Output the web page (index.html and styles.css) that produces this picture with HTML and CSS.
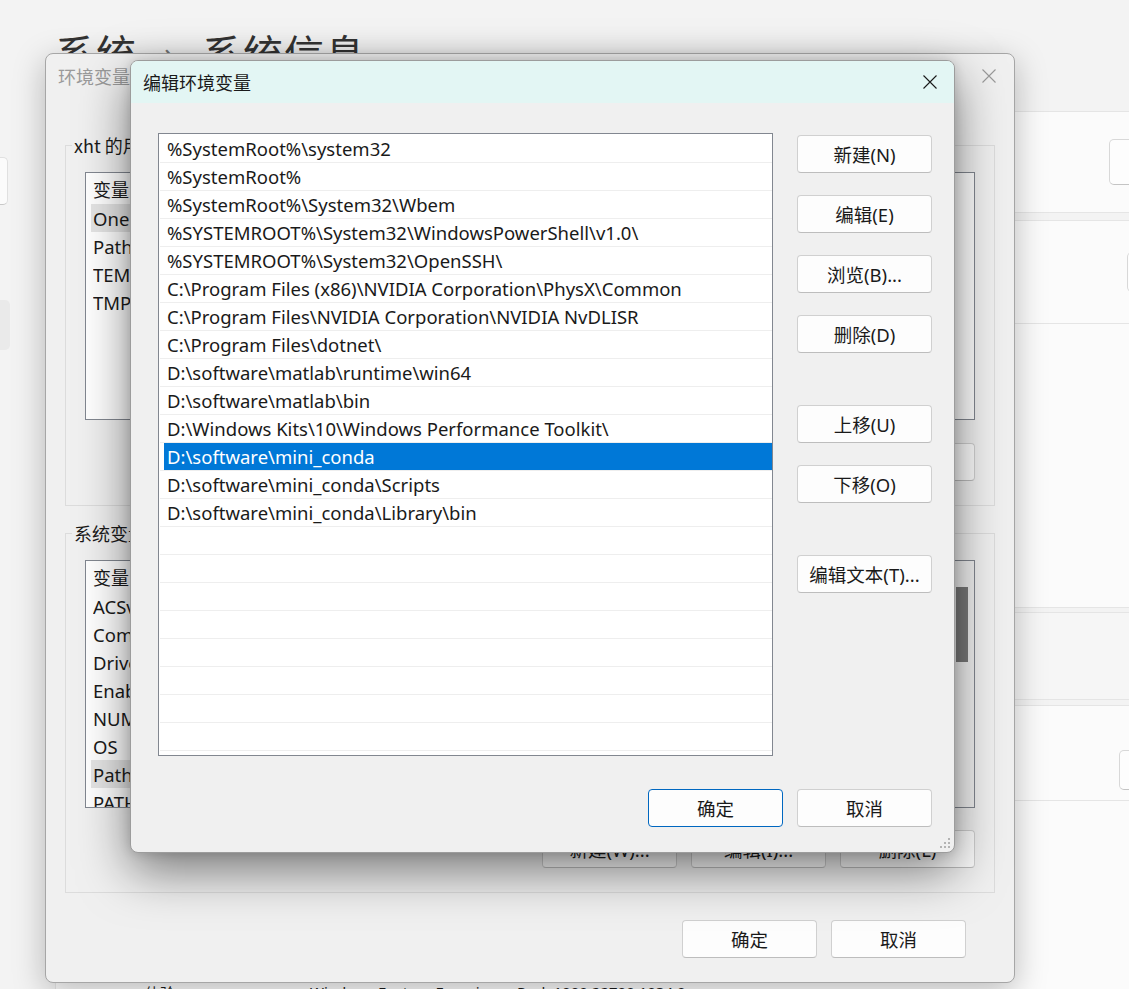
FILE: index.html
```html
<!DOCTYPE html>
<html lang="zh-CN">
<head>
    <meta charset="UTF-8">
    <title>编辑环境变量</title>
    <link rel="stylesheet" href="styles.css">
</head>
<body>
    <!-- settings app in the back -->
    <div class="settings">
        <div class="nav">
            <div class="nav-search"></div>
            <div class="nav-item"></div>
        </div>
        <div class="page">
            <div class="page-title">系统<span class="crumb">›</span>系统信息</div>
            <div class="cards">
                <div class="card card-a">
                    <div class="card-btn btn-a"></div>
                </div>
                <div class="card card-b">
                    <div class="card-head">
                        <div class="card-btn btn-b"></div>
                    </div>
                    <div class="card-body"></div>
                </div>
                <div class="card card-c"></div>
                <div class="card card-d">
                    <div class="card-head">
                        <div class="card-btn btn-d"></div>
                    </div>
                    <div class="spec-list">
                        <div class="spec"><span class="spec-key">版本</span><span>Windows 11 专业版</span></div>
                        <div class="spec"><span class="spec-key">版本号</span><span>22H2</span></div>
                        <div class="spec"><span class="spec-key">安装日期</span><span>2023/3/2</span></div>
                        <div class="spec"><span class="spec-key">操作系统版本</span><span>22621.1413</span></div>
                        <div class="spec"><span class="spec-key">体验</span><span>Windows Feature Experience Pack 1000.22700.1034.0</span></div>
                    </div>
                </div>
            </div>
        </div>
    </div>

    <!-- 环境变量 (inactive) -->
    <div class="window env-window">
        <div class="titlebar">
            <span class="title">环境变量</span>
            <svg class="close" width="16" height="16" viewBox="0 0 16 16"><path d="M1.5 1.5L14.5 14.5M14.5 1.5L1.5 14.5" stroke="currentColor" stroke-width="1.1" fill="none"/></svg>
        </div>
        <div class="env-body">
            <fieldset class="group">
                <legend>xht 的用户变量(U)</legend>
                <div class="listview">
                    <div class="lv-content">
                        <div class="lv-head"><span class="col-name">变量</span><span>值</span></div>
                        <div class="lv-row hot"><span class="col-name">OneDrive</span><span>C:\Users\xht\OneDrive</span></div>
                        <div class="lv-row"><span class="col-name">Path</span><span>C:\Users\xht\AppData\Local\Microsoft\WindowsApps;</span></div>
                        <div class="lv-row"><span class="col-name">TEMP</span><span>C:\Users\xht\AppData\Local\Temp</span></div>
                        <div class="lv-row"><span class="col-name">TMP</span><span>C:\Users\xht\AppData\Local\Temp</span></div>
                    </div>
                </div>
                <div class="btn-row">
                    <button class="btn">新建(N)...</button>
                    <button class="btn">编辑(E)...</button>
                    <button class="btn">删除(D)</button>
                </div>
            </fieldset>
            <fieldset class="group group-sys">
                <legend>系统变量(S)</legend>
                <div class="listview">
                    <div class="lv-content">
                        <div class="lv-head"><span class="col-name">变量</span><span>值</span></div>
                        <div class="lv-row"><span class="col-name">ACSvcPort</span><span>17532</span></div>
                        <div class="lv-row"><span class="col-name">ComSpec</span><span>C:\Windows\system32\cmd.exe</span></div>
                        <div class="lv-row"><span class="col-name">DriverData</span><span>C:\Windows\System32\Drivers\DriverData</span></div>
                        <div class="lv-row"><span class="col-name">EnableLog</span><span>INFO</span></div>
                        <div class="lv-row"><span class="col-name">NUMBER_OF_PROCESSORS</span><span>16</span></div>
                        <div class="lv-row"><span class="col-name">OS</span><span>Windows_NT</span></div>
                        <div class="lv-row hot"><span class="col-name">Path</span><span>%SystemRoot%\system32;%SystemRoot%;</span></div>
                        <div class="lv-row"><span class="col-name">PATHEXT</span><span>.COM;.EXE;.BAT;.CMD</span></div>
                    </div>
                    <div class="lv-scroll"><div class="lv-thumb"></div></div>
                </div>
                <div class="btn-row">
                    <button class="btn">新建(W)...</button>
                    <button class="btn">编辑(I)...</button>
                    <button class="btn">删除(L)</button>
                </div>
            </fieldset>
            <div class="footer env-footer">
                <button class="btn">确定</button>
                <button class="btn">取消</button>
            </div>
        </div>
    </div>

    <!-- 编辑环境变量 (active) -->
    <div class="window edit-window">
        <div class="titlebar active">
            <span class="title">编辑环境变量</span>
            <svg class="close" width="16" height="16" viewBox="0 0 16 16"><path d="M1.5 1.5L14.5 14.5M14.5 1.5L1.5 14.5" stroke="currentColor" stroke-width="1.1" fill="none"/></svg>
        </div>
        <div class="edit-body">
            <div class="edit-main">
                <div class="listbox" id="path_list"></div>
                <div class="btn-col">
                    <button class="btn">新建(N)</button>
                    <button class="btn">编辑(E)</button>
                    <button class="btn">浏览(B)...</button>
                    <button class="btn">删除(D)</button>
                    <button class="btn spaced">上移(U)</button>
                    <button class="btn">下移(O)</button>
                    <button class="btn spaced">编辑文本(T)...</button>
                </div>
            </div>
            <div class="footer">
                <button class="btn focused">确定</button>
                <button class="btn">取消</button>
            </div>
        </div>
        <svg class="grip" width="12" height="12" viewBox="0 0 12 12">
            <rect x="9" y="1" width="2" height="2"/>
            <rect x="5" y="5" width="2" height="2"/>
            <rect x="9" y="5" width="2" height="2"/>
            <rect x="1" y="9" width="2" height="2"/>
            <rect x="5" y="9" width="2" height="2"/>
            <rect x="9" y="9" width="2" height="2"/>
        </svg>
    </div>

    <script>
        var paths = [
            '%SystemRoot%\\system32',
            '%SystemRoot%',
            '%SystemRoot%\\System32\\Wbem',
            '%SYSTEMROOT%\\System32\\WindowsPowerShell\\v1.0\\',
            '%SYSTEMROOT%\\System32\\OpenSSH\\',
            'C:\\Program Files (x86)\\NVIDIA Corporation\\PhysX\\Common',
            'C:\\Program Files\\NVIDIA Corporation\\NVIDIA NvDLISR',
            'C:\\Program Files\\dotnet\\',
            'D:\\software\\matlab\\runtime\\win64',
            'D:\\software\\matlab\\bin',
            'D:\\Windows Kits\\10\\Windows Performance Toolkit\\',
            'D:\\software\\mini_conda',
            'D:\\software\\mini_conda\\Scripts',
            'D:\\software\\mini_conda\\Library\\bin'
        ];
        var selected = 11;
        var list = document.getElementById('path_list');

        // the listbox keeps drawing empty rows down to the bottom
        for (var i = 0; i < 22; i++) {
            var row = document.createElement('div');
            row.className = 'lb-row' + (i === selected ? ' selected' : '');
            var item = document.createElement('div');
            item.className = 'lb-item';
            item.textContent = paths[i] || '';
            row.appendChild(item);
            list.appendChild(row);
        }
    </script>
</body>
</html>
```

FILE: styles.css
```css
* {box-sizing: border-box;}
html, body {
    margin: 0;
    width: 1129px;
    height: 989px;
    overflow: hidden;
}
body {
    position: relative;
    background: #f3f3f3;
    font-family: "Noto Sans", "Noto Sans CJK SC", sans-serif;
    font-size: 18.5px;
    color: #1a1a1a;
}

/* ---- settings app behind ---- */
.settings {
    display: flex;
    height: 989px;
    overflow: hidden;
}
.nav {
    width: 10px;
    flex-shrink: 0;
}
.nav-search {
    margin: 157px 0 0 -40px;
    width: 48px;
    height: 48px;
    background: #fbfbfb;
    border: 1px solid #e0e0e0;
    border-bottom-color: #c8c8c8;
    border-radius: 5px;
}
.nav-item {
    margin: 95px 0 0 -40px;
    width: 50px;
    height: 50px;
    background: #eaeaea;
    border-radius: 5px;
}
.page {
    flex: 1;
    min-width: 0;
    padding: 24px 0 0 45px;
}
.page-title {
    font-family: "Noto Sans CJK SC", sans-serif;
    font-size: 40px;
    line-height: 56px;
    color: #333;
    letter-spacing: 1px;
}
.crumb {
    margin: 0 26px;
    color: #777;
}
.cards {
    margin: 31px -111px 0 0;
    display: flex;
    flex-direction: column;
}
.card {
    background: #fbfbfb;
    border: 1px solid #e5e5e5;
    border-radius: 6px;
}
.card-a {
    height: 102px;
    display: flex;
    align-items: center;
    justify-content: flex-end;
    padding-right: 12px;
}
.card-b {
    margin-top: 7px;
    height: 388px;
}
.card-head {
    height: 103px;
    display: flex;
    align-items: center;
    justify-content: flex-end;
    padding-right: 12px;
    border-bottom: 1px solid #e5e5e5;
}
.card-c {
    margin-top: 4px;
    height: 88px;
    background: #f6f6f6;
}
.card-d {
    margin-top: 5px;
    height: 300px;
}
.card-d .card-head {
    height: 95px;
    align-items: flex-end;
    padding-bottom: 10px;
}
.card-btn {
    height: 40px;
    background: #fdfdfd;
    border: 1px solid #d8d8d8;
    border-bottom-color: #c4c4c4;
    border-radius: 5px;
}
.btn-a {
    width: 118px;
    height: 46px;
}
.btn-b {
    width: 100px;
}
.btn-d {
    width: 108px;
}
.spec-list {
    padding: 47px 0 0 89px;
    font-size: 15px;
}
.spec {
    display: flex;
    height: 32px;
    align-items: center;
    white-space: nowrap;
}
.spec-key {
    width: 165px;
}

/* ---- windows ---- */
.window {
    position: absolute;
    background: #f0f0f0;
    border-radius: 8px;
    display: flex;
    flex-direction: column;
}
.titlebar {
    display: flex;
    align-items: center;
    justify-content: space-between;
    flex-shrink: 0;
}
.titlebar .title {
    font-family: "Noto Sans CJK SC", sans-serif;
    font-size: 18px;
}
.close {
    display: block;
}

.btn {
    width: 135px;
    height: 38px;
    padding: 0;
    background: #fdfdfd;
    border: 1px solid #d0d0d0;
    border-bottom-color: #bdbdbd;
    border-radius: 4px;
    font-family: "Noto Sans", "Noto Sans CJK SC", sans-serif;
    font-size: 18.5px;
    color: #1a1a1a;
}
.btn.focused {
    border: 1px solid #0067c0;
}
.footer {
    display: flex;
    justify-content: flex-end;
    gap: 14px;
}

/* environment variables dialog */
.env-window {
    left: 45px;
    top: 53px;
    width: 970px;
    height: 930px;
    border: 1px solid #a6a6a6;
    box-shadow: 0 8px 32px rgba(0, 0, 0, 0.26);
}
.env-window .titlebar {
    height: 43px;
    padding: 0 17px 0 12px;
}
.env-window .title,
.env-window .close {
    color: #9a9a9a;
}
.env-body {
    padding: 36px 19px 0 19px;
}
.group {
    margin: 0;
    padding: 15px 19px 24px 19px;
    border: 1px solid #dcdcdc;
    min-width: 0;
}
.group legend {
    margin-left: -13px;
    padding: 0 2px;
    line-height: 24px;
    font-family: "Noto Sans CJK SC", sans-serif;
    font-size: 18px;
}
.group-sys {
    margin-top: 15px;
    padding-bottom: 24px;
}
.listview {
    display: flex;
    height: 248px;
    background: #fff;
    border: 1px solid #828790;
    overflow: hidden;
}
.lv-content {
    flex: 1;
    min-width: 0;
}
.lv-head, .lv-row {
    display: flex;
    align-items: center;
    white-space: nowrap;
}
.lv-head {
    height: 31px;
    padding-left: 7px;
    font-family: "Noto Sans CJK SC", sans-serif;
    font-size: 18px;
}
.lv-row {
    width: 820px;
    height: 28px;
    margin-left: 5px;
    padding-left: 2px;
    overflow: hidden;
}
.lv-row.hot {
    background: #e5e5e5;
}
.col-name {
    width: 230px;
    flex-shrink: 0;
    overflow: hidden;
}
.lv-scroll {
    width: 19px;
    flex-shrink: 0;
    background: #f2f2f2;
    padding: 26px 0 0 1px;
}
.lv-thumb {
    width: 12px;
    height: 75px;
    background: #7a7a7a;
}
.btn-row {
    display: flex;
    justify-content: flex-end;
    gap: 14px;
    margin-top: 23px;
}
.group-sys .btn-row {
    margin-top: 22px;
}
.env-footer {
    margin-top: 27px;
    padding-right: 29px;
}

/* edit dialog */
.edit-window {
    left: 130px;
    top: 60px;
    width: 825px;
    height: 793px;
    border: 1px solid #9c9c9c;
    overflow: hidden;
    box-shadow: 0 18px 50px rgba(0, 0, 0, 0.5), 0 0 12px rgba(0, 0, 0, 0.14);
}
.edit-window .titlebar {
    height: 42px;
    padding: 0 16px 0 12px;
    background: #e3f6f4;
}
.edit-body {
    padding: 30px 22px 0 27px;
}
.edit-main {
    display: flex;
    gap: 24px;
}
.listbox {
    width: 615px;
    height: 623px;
    background: #fff;
    border: 1px solid #828790;
    padding: 1px 0 0 1px;
    overflow: hidden;
}
.lb-row {
    height: 28px;
    border-bottom: 1px solid #eeeeee;
}
.lb-item {
    height: 27px;
    line-height: 27px;
    margin-left: 4px;
    padding-left: 3px;
    white-space: nowrap;
}
.lb-row.selected .lb-item {
    background: #0078d7;
    color: #fff;
}
.btn-col {
    display: flex;
    flex-direction: column;
    gap: 22px;
    padding-top: 2px;
}
.btn-col .spaced {
    margin-top: 30px;
}
.edit-window .footer {
    margin-top: 33px;
}
.grip {
    position: absolute;
    right: 3px;
    bottom: 3px;
    fill: #b4b4b4;
}
```
